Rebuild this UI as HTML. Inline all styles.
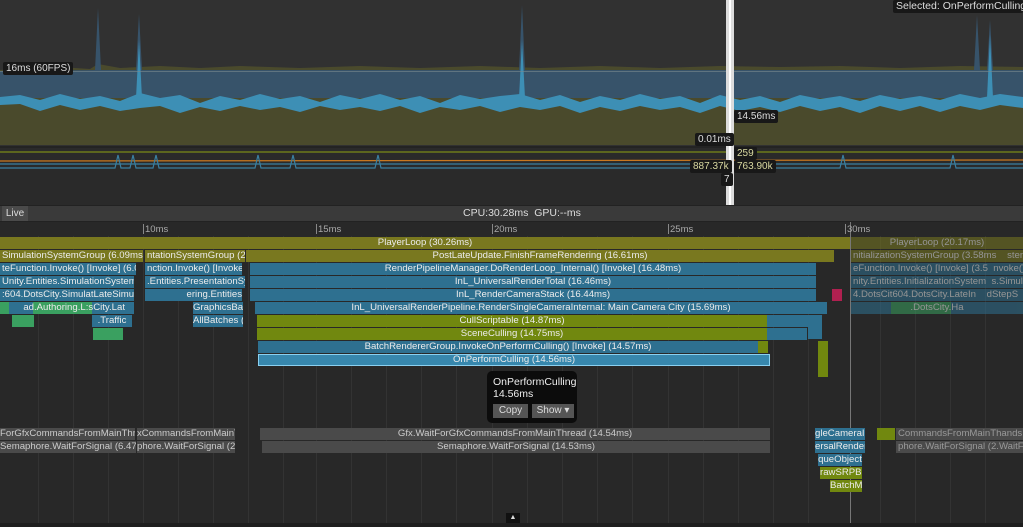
<!DOCTYPE html>
<html><head><style>
*{margin:0;padding:0;box-sizing:border-box}
body{width:1023px;height:527px;background:#282828;position:relative;overflow:hidden;font-family:"Liberation Sans",sans-serif;font-size:9px;color:#e8e8e8}
.a{position:absolute}
.b{position:absolute;height:12px;line-height:12px;white-space:nowrap;overflow:hidden;text-align:center;color:#ececec;font-size:9.6px}
.o{background:#79781f}.bl{background:#2e7090}.g{background:#71880f}.gr{background:#4a4a4a}
.lab{position:absolute;background:#181818;color:#ddd;font-size:10px;padding:0 3px;line-height:13px;border-radius:2px;white-space:nowrap}
.t{text-align:left;padding-left:2px}
</style></head><body>
<div class="a" style="left:0;top:0;width:1023px;height:146px;background:#313131"></div>
<svg class="a" style="left:0;top:0" width="1023" height="205">
<polygon fill="#4a4a2c" points="0,70 30,68 60,67 90,69 98,64 120,68 160,66 200,68 240,66 300,68 360,66 420,68 480,66 540,68 600,66 660,68 720,66 780,67 840,66 900,68 960,66 1023,67 1023,145 0,145"/>
<polygon fill="#37536a" points="0,71 95,70 98,8 101,70 136,70 139,14 142,70 519,70 522,5 525,70 974,70 977,15 980,70 987,70 990,20 993,70 1023,70 1023,98 0,98"/>
<polygon fill="#3d8fb5" points="0,97 20,95 40,100 60,94 80,99 100,96 120,101 140,93 160,98 180,95 200,103 220,96 240,100 260,94 280,99 300,96 320,102 340,95 360,99 380,94 400,100 420,96 440,103 460,95 480,99 500,96 520,94 540,100 560,95 580,102 600,96 620,100 640,94 660,99 680,96 700,103 720,95 740,100 760,96 780,102 800,95 820,99 840,96 860,101 880,95 900,99 920,96 940,100 960,94 980,98 1000,94 1023,97 1023,108 1000,105 980,110 960,106 940,112 920,106 900,111 880,106 860,113 840,107 820,111 800,106 780,112 760,107 740,111 720,106 700,113 680,107 660,110 640,106 620,111 600,107 580,113 560,106 540,110 520,107 500,112 480,106 460,110 440,107 420,113 400,106 380,111 360,107 340,110 320,106 300,112 280,107 260,110 240,106 220,111 200,107 180,113 160,106 140,108 120,111 100,106 80,110 60,105 40,111 20,104 0,105"/>
<polygon fill="#3d8fb5" points="136,98 139,40 142,98"/><polygon fill="#3d8fb5" points="519,98 522,40 525,98"/><polygon fill="#3d8fb5" points="987,98 990,35 993,98"/>
<line x1="0" y1="71.5" x2="1023" y2="71.5" stroke="#7a8a90" stroke-width="1" opacity=".6"/>
<rect x="0" y="146" width="1023" height="59" fill="#2a2a2a"/>
<line x1="0" y1="147" x2="1023" y2="147" stroke="#1c1c1c"/>
<polyline fill="none" stroke="#7a8a18" stroke-width="1.2" points="0,152 1023,152"/>
<polyline fill="none" stroke="#c87820" stroke-width="1.2" points="0,161 1023,160"/>
<polyline fill="none" stroke="#3a7fa0" stroke-width="1.2" points="0,164 1023,164"/>
<polyline fill="none" stroke="#3a7fa0" stroke-width="1.2" points="0,168 115,168 118,155 121,168 130,168 133,155 136,168 153,168 156,155 159,168 255,168 258,155 261,168 290,168 293,155 296,168 375,168 378,155 381,168 840,168 843,155 846,168 950,168 953,155 956,168 1023,168"/>
<rect x="726" y="0" width="8" height="205" fill="#dcdcdc"/>
<rect x="729" y="0" width="2" height="205" fill="#fff"/>
</svg>
<div class="lab" style="left:3px;top:62px">16ms (60FPS)</div>
<div class="lab" style="left:734px;top:110px">14.56ms</div>
<div class="lab" style="left:695px;top:133px">0.01ms</div>
<div class="lab" style="left:734px;top:147px;color:#d8d8a0">259</div>
<div class="lab" style="left:690px;top:160px;color:#d8d8a0">887.37k</div>
<div class="lab" style="left:734px;top:160px;color:#d8d8a0">763.90k</div>
<div class="lab" style="left:721px;top:173px">7</div>
<div class="lab" style="left:893px;top:0;font-size:10.5px;width:130px">Selected: OnPerformCulling</div>
<div class="a" style="left:0;top:205px;width:1023px;height:17px;background:#3a3a3a;border-top:1px solid #222;border-bottom:1px solid #222"></div>
<div class="a" style="left:2px;top:206px;width:26px;height:15px;background:#4a4a4a;color:#ddd;font-size:10px;line-height:15px;text-align:center">Live</div>
<div class="a" style="left:463px;top:206px;font-size:10.5px;line-height:15px;color:#ddd">CPU:30.28ms&nbsp;&nbsp;GPU:--ms</div>
<svg class="a" style="left:0;top:222px" width="1023" height="305">
<g stroke="#888" stroke-width="1">
<line x1="143.5" y1="2" x2="143.5" y2="12"/><line x1="316.5" y1="2" x2="316.5" y2="12"/><line x1="492.5" y1="2" x2="492.5" y2="12"/><line x1="668.5" y1="2" x2="668.5" y2="12"/><line x1="845.5" y1="2" x2="845.5" y2="12"/>
</g>
<g stroke="#333">
<line x1="143.5" y1="14" x2="143.5" y2="305"/><line x1="178.5" y1="14" x2="178.5" y2="305"/><line x1="213.5" y1="14" x2="213.5" y2="305"/><line x1="248.5" y1="14" x2="248.5" y2="305"/><line x1="283.5" y1="14" x2="283.5" y2="305"/><line x1="316.5" y1="14" x2="316.5" y2="305"/><line x1="351.5" y1="14" x2="351.5" y2="305"/><line x1="386.5" y1="14" x2="386.5" y2="305"/><line x1="421.5" y1="14" x2="421.5" y2="305"/><line x1="456.5" y1="14" x2="456.5" y2="305"/><line x1="492.5" y1="14" x2="492.5" y2="305"/><line x1="527.5" y1="14" x2="527.5" y2="305"/><line x1="562.5" y1="14" x2="562.5" y2="305"/><line x1="597.5" y1="14" x2="597.5" y2="305"/><line x1="632.5" y1="14" x2="632.5" y2="305"/><line x1="668.5" y1="14" x2="668.5" y2="305"/><line x1="703.5" y1="14" x2="703.5" y2="305"/><line x1="738.5" y1="14" x2="738.5" y2="305"/><line x1="773.5" y1="14" x2="773.5" y2="305"/><line x1="808.5" y1="14" x2="808.5" y2="305"/><line x1="880.5" y1="14" x2="880.5" y2="305"/><line x1="915.5" y1="14" x2="915.5" y2="305"/><line x1="950.5" y1="14" x2="950.5" y2="305"/><line x1="985.5" y1="14" x2="985.5" y2="305"/>
<line x1="38.5" y1="14" x2="38.5" y2="305"/><line x1="73.5" y1="14" x2="73.5" y2="305"/><line x1="108.5" y1="14" x2="108.5" y2="305"/>
</g>
<line x1="850.5" y1="0" x2="850.5" y2="305" stroke="#777"/>
<g fill="#aaa" font-size="9.5" font-family="Liberation Sans"><text x="145" y="10">10ms</text><text x="318" y="10">15ms</text><text x="494" y="10">20ms</text><text x="670" y="10">25ms</text><text x="847" y="10">30ms</text></g>
</svg>
<div class="b o" style="left:0;top:237px;width:850px">PlayerLoop (30.26ms)</div>
<div class="b o" style="left:851px;top:237px;width:172px;opacity:.55">PlayerLoop (20.17ms)</div>
<div class="b o t" style="left:0;top:250px;width:143px">SimulationSystemGroup (6.09ms)</div>
<div class="b o t" style="left:145px;top:250px;width:100px">ntationSystemGroup (2.7</div>
<div class="b o" style="left:246px;top:250px;width:588px">PostLateUpdate.FinishFrameRendering (16.61ms)</div>
<div class="b o t" style="left:851px;top:250px;width:172px;opacity:.55">nitializationSystemGroup (3.58ms&nbsp;&nbsp;&nbsp;&nbsp;stemG</div>
<div class="b bl t" style="left:0;top:263px;width:136px">teFunction.Invoke() [Invoke] (6.09</div>
<div class="b bl t" style="left:145px;top:263px;width:97px">nction.Invoke() [Invoke]</div>
<div class="b bl" style="left:250px;top:263px;width:566px">RenderPipelineManager.DoRenderLoop_Internal() [Invoke] (16.48ms)</div>
<div class="b bl t" style="left:851px;top:263px;width:172px;opacity:.55">eFunction.Invoke() [Invoke] (3.5&nbsp;&nbsp;nvoke()</div>
<div class="b bl t" style="left:0;top:276px;width:134px">Unity.Entities.SimulationSystemGr</div>
<div class="b bl t" style="left:145px;top:276px;width:100px">.Entities.PresentationSys</div>
<div class="b bl" style="left:250px;top:276px;width:566px">InL_UniversalRenderTotal (16.46ms)</div>
<div class="b bl t" style="left:851px;top:276px;width:172px;opacity:.55">nity.Entities.InitializationSystem&nbsp;&nbsp;s.Simul</div>
<div class="b bl t" style="left:0;top:289px;width:134px">:604.DotsCity.SimulatLateSimul</div>
<div class="b bl t" style="left:145px;top:289px;width:97px;text-align:right">ering.Entities</div>
<div class="b bl" style="left:250px;top:289px;width:566px">InL_RenderCameraStack (16.44ms)</div>
<div class="a" style="left:832px;top:289px;width:10px;height:12px;background:#b02050"></div>
<div class="b bl t" style="left:851px;top:289px;width:172px;opacity:.55">4.DotsCit604.DotsCity.LateIn&nbsp;&nbsp;&nbsp;&nbsp;dStepS</div>
<div class="b bl t" style="left:0;top:302px;width:134px;background:linear-gradient(90deg,#3aa060 0 9px,#2e7090 9px 33px,#3aa060 33px 92px,#2e7090 92px)">&nbsp;&nbsp;&nbsp;&nbsp;&nbsp;&nbsp;&nbsp;&nbsp;ad.Authoring.L:sCity.Lat</div>
<div class="b bl" style="left:193px;top:302px;width:50px">GraphicsBa</div>
<div class="b bl" style="left:255px;top:302px;width:572px">InL_UniversalRenderPipeline.RenderSingleCameraInternal: Main Camera City (15.69ms)</div>
<div class="b bl" style="left:851px;top:302px;width:172px;opacity:.55;background:linear-gradient(90deg,#2e7090 0 40px,#3aa060 40px 100px,#2e7090 100px)">.DotsCity.Ha</div>
<div class="b g" style="left:257px;top:315px;width:510px">CullScriptable (14.87ms)</div>
<div class="b bl" style="left:767px;top:315px;width:50px"></div>
<div class="b bl" style="left:92px;top:315px;width:40px">.Traffic</div>
<div class="b bl" style="left:193px;top:315px;width:50px">AllBatches (</div>
<div class="a" style="left:12px;top:315px;width:22px;height:12px;background:#3aa060"></div>
<div class="b g" style="left:257px;top:328px;width:510px">SceneCulling (14.75ms)</div>
<div class="b bl" style="left:767px;top:328px;width:40px"></div>
<div class="a" style="left:93px;top:328px;width:30px;height:12px;background:#3aa060"></div>
<div class="b bl" style="left:258px;top:341px;width:500px">BatchRendererGroup.InvokeOnPerformCulling() [Invoke] (14.57ms)</div>
<div class="a" style="left:758px;top:341px;width:10px;height:12px;background:#71880f"></div>
<div class="b" style="left:258px;top:354px;width:512px;background:#3787ad;border:1px solid #8ad0f0;line-height:10px">OnPerformCulling (14.56ms)</div>
<div class="a" style="left:818px;top:341px;width:10px;height:36px;background:#71880f"></div>
<div class="a" style="left:808px;top:315px;width:14px;height:24px;background:#2e7090"></div>
<div class="a" style="left:487px;top:371px;width:90px;height:52px;background:#0c0c0c;border-radius:5px"></div>
<div class="a" style="left:493px;top:376px;font-size:10.5px;line-height:12px;color:#eee">OnPerformCulling<br>14.56ms</div>
<div class="a" style="left:493px;top:404px;width:35px;height:14px;background:#555;color:#ddd;font-size:10px;line-height:14px;text-align:center">Copy</div>
<div class="a" style="left:532px;top:404px;width:42px;height:14px;background:#555;color:#ddd;font-size:10px;line-height:14px;text-align:center">Show ▾</div>
<div class="b gr" style="left:0;top:428px;width:135px;color:#ccc">ForGfxCommandsFromMainThread</div>
<div class="b gr" style="left:137px;top:428px;width:98px;color:#ccc">xCommandsFromMainTh</div>
<div class="b gr" style="left:260px;top:428px;width:510px;color:#ccc">Gfx.WaitForGfxCommandsFromMainThread (14.54ms)</div>
<div class="b bl" style="left:815px;top:428px;width:50px">gleCameraIn</div>
<div class="a" style="left:877px;top:428px;width:18px;height:12px;background:#71880f"></div>
<div class="b gr t" style="left:896px;top:428px;width:127px;color:#999">CommandsFromMainThandsFrom</div>
<div class="b gr" style="left:0;top:441px;width:136px;color:#ccc">Semaphore.WaitForSignal (6.47ms)</div>
<div class="b gr" style="left:137px;top:441px;width:98px;color:#ccc">phore.WaitForSignal (2.6</div>
<div class="b gr" style="left:262px;top:441px;width:508px;color:#ccc">Semaphore.WaitForSignal (14.53ms)</div>
<div class="b bl" style="left:815px;top:441px;width:50px">ersalRender</div>
<div class="b gr t" style="left:896px;top:441px;width:127px;color:#999">phore.WaitForSignal (2.WaitForSi</div>
<div class="b bl" style="left:818px;top:454px;width:44px">queObject</div>
<div class="b g" style="left:820px;top:467px;width:42px">rawSRPBa</div>
<div class="b g" style="left:830px;top:480px;width:32px">BatchM</div>
<div class="a" style="left:506px;top:513px;width:14px;height:10px;background:#111;color:#ddd;font-size:7px;line-height:10px;text-align:center">▲</div>
<div class="a" style="left:0;top:523px;width:1023px;height:4px;background:#1e1e1e"></div>
</body></html>
